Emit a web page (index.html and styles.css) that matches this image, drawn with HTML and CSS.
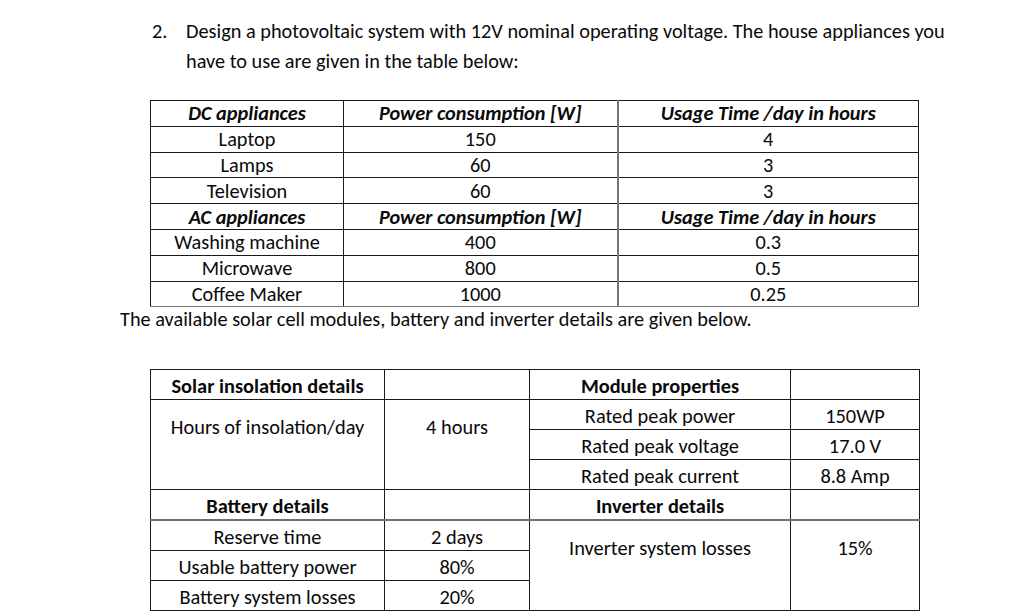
FILE: index.html
```html
<!DOCTYPE html>
<html>
<head>
<meta charset="utf-8">
<link rel="stylesheet" href="styles.css">
</head>
<body>
<div class="page">
  <div class="question">
    <span class="qnum">2.</span>
    <p class="qtext">Design a photovoltaic system with 12V nominal operating voltage. The house appliances you have to use are given in the table below:</p>
  </div>

  <table class="appl">
    <colgroup><col class="c1"><col class="c2"><col class="c3"></colgroup>
    <tr class="hd"><th>DC appliances</th><th>Power consumption [W]</th><th class="gl">Usage Time /day in hours</th></tr>
    <tr><td>Laptop</td><td>150</td><td class="gl">4</td></tr>
    <tr><td>Lamps</td><td>60</td><td class="gl">3</td></tr>
    <tr><td>Television</td><td>60</td><td class="gl">3</td></tr>
    <tr class="hd"><th>AC appliances</th><th>Power consumption [W]</th><th class="gl">Usage Time /day in hours</th></tr>
    <tr><td>Washing machine</td><td>400</td><td class="gl">0.3</td></tr>
    <tr><td>Microwave</td><td>800</td><td class="gl">0.5</td></tr>
    <tr class="last"><td>Coffee Maker</td><td>1000</td><td class="gl">0.25</td></tr>
  </table>

  <p class="note">The available solar cell modules, battery and inverter details are given below.</p>

  <table class="specs">
    <colgroup><col class="s1"><col class="s2"><col class="s3"><col class="s4"></colgroup>
    <tr><th>Solar insolation details</th><td></td><th>Module properties</th><td></td></tr>
    <tr><td rowspan="3" class="top">Hours of insolation/day</td><td rowspan="3" class="top">4 hours</td><td>Rated peak power</td><td>150WP</td></tr>
    <tr><td>Rated peak voltage</td><td>17.0 V</td></tr>
    <tr><td>Rated peak current</td><td>8.8 Amp</td></tr>
    <tr class="sec"><th>Battery details</th><td></td><th>Inverter details</th><td></td></tr>
    <tr class="sec2"><td>Reserve time</td><td>2 days</td><td rowspan="3" class="top">Inverter system losses</td><td rowspan="3" class="top">15%</td></tr>
    <tr><td>Usable battery power</td><td>80%</td></tr>
    <tr><td>Battery system losses</td><td>20%</td></tr>
  </table>
</div>
</body>
</html>
```

FILE: styles.css
```css
html, body {
  margin: 0;
  padding: 0;
  background: #ffffff;
}

body {
  font-family: Carlito, "Lato", "Open Sans", sans-serif;
  color: #0a0a0a;
  width: 1024px;
  height: 614px;
  overflow: hidden;
}

.page {
  padding: 17px 0 0 0;
}

.question {
  display: flex;
  padding-left: 152px;
  width: 820px;
}

.qnum {
  width: 34px;
  flex: none;
  font-size: 20.3px;
  line-height: 29.5px;
}

.qtext {
  margin: 0;
  font-size: 20.3px;
  line-height: 29.5px;
  width: 772px;
}

table {
  border-collapse: collapse;
  table-layout: fixed;
}

.appl {
  margin: 24px 0 0 150px;
  width: 768px;
  font-size: 20.3px;
}

.appl .c1 { width: 193px; }
.appl .c2 { width: 274px; }
.appl .c3 { width: 301px; }

.appl td, .appl th {
  border: 1px solid #1a1a1a;
  height: 24.8px;
  padding: 0;
  text-align: center;
  line-height: 24px;
  font-weight: normal;
}

.appl th {
  font-weight: bold;
  font-style: italic;
}

.appl .gl {
  border-left: 2px solid #777777;
}

.appl tr.last td {
  border-bottom-color: #777777;
}

.note {
  margin: 0 0 0 120px;
  font-size: 20.3px;
  line-height: 24px;
}

.specs {
  margin: 38px 0 0 150px;
  width: 769px;
  font-size: 20.4px;
}

.specs .s1 { width: 234px; }
.specs .s2 { width: 145px; }
.specs .s3 { width: 261px; }
.specs .s4 { width: 129px; }

.specs td, .specs th {
  border: 1px solid #1a1a1a;
  height: 25px;
  padding: 4px 0 0 0;
  text-align: center;
  line-height: 25px;
  font-weight: normal;
}

.specs th {
  font-weight: bold;
}

.specs td.top {
  vertical-align: top;
  padding-top: 15px;
}

.specs tr.sec td, .specs tr.sec th {
  border-top-color: #6f6f6f;
}

.specs tr.sec2 td {
  border-top: 2px solid #6f6f6f;
}
```
